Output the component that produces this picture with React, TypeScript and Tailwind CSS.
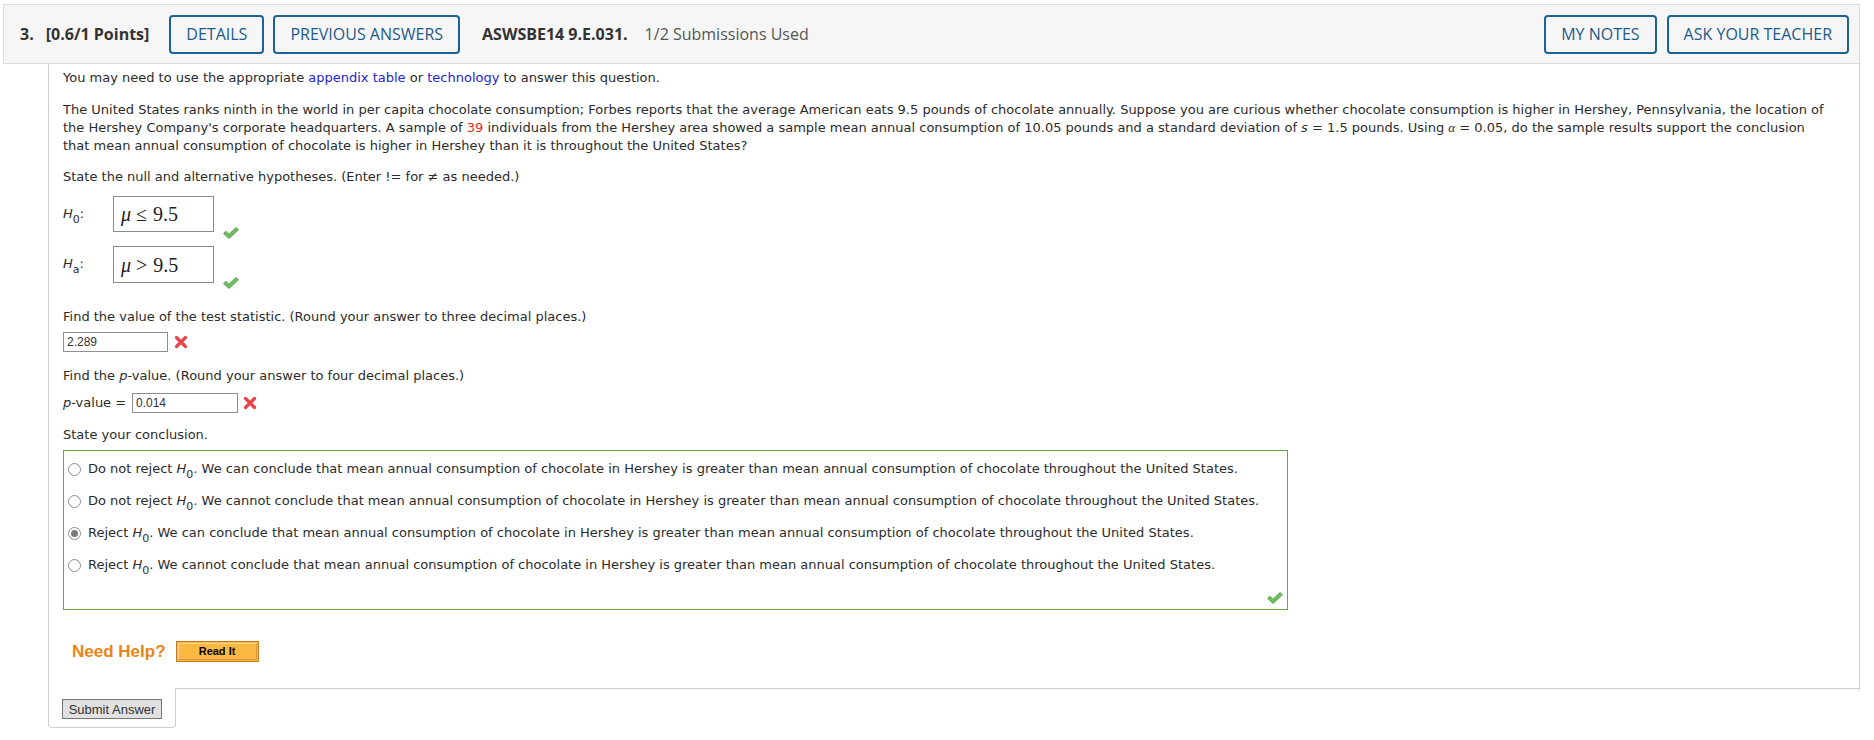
import React from "react";

const Check = () => (
  <svg width="16" height="12" viewBox="0 0 16 12" className="block">
    <polygon points="0.5,6.5 2.8,4.2 6,7.2 13,0.5 15.5,2.8 6,11.5" fill="#6dbf5f" stroke="#4d9a42" strokeWidth="0.8" strokeLinejoin="round" />
  </svg>
);

const Cross = () => (
  <svg width="14" height="14" viewBox="0 0 14 14" className="block">
    <path d="M2.5 2.5 L11.5 11.5 M11.5 2.5 L2.5 11.5" stroke="#e8454a" strokeWidth="3.2" strokeLinecap="round" />
  </svg>
);

const H0 = () => (
  <span className="whitespace-nowrap">
    <i>H</i>
    <sub className="text-[11px] not-italic bottom-[-5px]">0</sub>
  </span>
);

const Radio = ({ checked }: { checked?: boolean }) => (
  <span className="w-[13px] h-[13px] rounded-full border border-[#8c8c8c] bg-white flex items-center justify-center shrink-0">
    {checked && <span className="w-[7px] h-[7px] rounded-full bg-[#7a7a7a]" />}
  </span>
);

const HeaderButton = ({ children }: { children: React.ReactNode }) => (
  <button className="h-[39px] px-[15px] border-2 border-[#1c6197] rounded-[4px] text-[16px] text-[#1d5a8c] bg-[#f6f6f6] leading-none">
    {children}
  </button>
);

const options = [
  { pre: "Do not reject ", post: ". We can conclude that mean annual consumption of chocolate in Hershey is greater than mean annual consumption of chocolate throughout the United States." },
  { pre: "Do not reject ", post: ". We cannot conclude that mean annual consumption of chocolate in Hershey is greater than mean annual consumption of chocolate throughout the United States." },
  { pre: "Reject ", post: ". We can conclude that mean annual consumption of chocolate in Hershey is greater than mean annual consumption of chocolate throughout the United States.", checked: true },
  { pre: "Reject ", post: ". We cannot conclude that mean annual consumption of chocolate in Hershey is greater than mean annual consumption of chocolate throughout the United States." },
];

export default function App() {
  return (
    <div className="w-[1874px] h-[740px] bg-white overflow-hidden">
      <div className="ml-[3px] mt-[4px] w-[1857px] h-[60px] border border-[#dcdcdc] bg-[#f6f6f6] flex items-center pl-[16px] pr-[10px] font-['Open_Sans',sans-serif]">
        <span className="text-[16px] font-bold text-[#333]">3.</span>
        <span className="ml-[12px] text-[16px] font-bold text-[#333]">[0.6/1 Points]</span>
        <div className="ml-[20px] flex gap-[9px]">
          <HeaderButton>DETAILS</HeaderButton>
          <HeaderButton>PREVIOUS ANSWERS</HeaderButton>
        </div>
        <span className="ml-[22px] text-[16px] font-bold text-[#333]">ASWSBE14 9.E.031.</span>
        <span className="ml-[17px] text-[16px] text-[#555]">1/2 Submissions Used</span>
        <div className="ml-auto flex gap-[10px]">
          <HeaderButton>MY NOTES</HeaderButton>
          <HeaderButton>ASK YOUR TEACHER</HeaderButton>
        </div>
      </div>

      <div className="ml-[48px] w-[1812px] border-l border-r border-[#cfcfcf] pl-[14px] pt-[5px] pb-[26px] font-['DejaVu_Sans',Verdana,sans-serif] text-[13px] leading-[18px] text-[#2b2b2b]">
        <div>
          You may need to use the appropriate <span className="text-[#2323d3]">appendix table</span> or{" "}
          <span className="text-[#2323d3]">technology</span> to answer this question.
        </div>
        <div className="mt-[14px] whitespace-nowrap">
          <div>
            The United States ranks ninth in the world in per capita chocolate consumption; Forbes reports that the average American eats 9.5 pounds of chocolate annually. Suppose you are curious whether chocolate consumption is higher in Hershey, Pennsylvania, the location of
          </div>
          <div>
            the Hershey Company's corporate headquarters. A sample of <span className="text-[#e8261c]">39</span> individuals from the Hershey area showed a sample mean annual consumption of 10.05 pounds and a standard deviation of <i>s</i> = 1.5 pounds. Using <i className="font-['Liberation_Serif',serif]">α</i> = 0.05, do the sample results support the conclusion
          </div>
          <div>that mean annual consumption of chocolate is higher in Hershey than it is throughout the United States?</div>
        </div>
        <div className="mt-[13px]">State the null and alternative hypotheses. (Enter != for ≠ as needed.)</div>

        <div className="mt-[10px] h-[35px] flex items-start">
          <span className="w-[50px] h-[35px] flex items-center">
            <H0 />:
          </span>
          <div className="w-[101px] h-[36px] border border-[#8a8a8a] bg-white pl-[7px] flex items-center font-['Liberation_Serif',serif] text-[20px] text-[#222]">
            <i>μ</i>
            <span className="ml-[5px]">≤</span>
            <span className="ml-[6px]">9.5</span>
          </div>
          <span className="ml-[9px] mt-[31px]">
            <Check />
          </span>
        </div>
        <div className="mt-[15px] h-[36px] flex items-start">
          <span className="w-[50px] h-[36px] flex items-center">
            <span className="whitespace-nowrap">
              <i>H</i>
              <sub className="text-[11px] not-italic bottom-[-5px]">a</sub>
            </span>
            :
          </span>
          <div className="w-[101px] h-[37px] border border-[#8a8a8a] bg-white pl-[7px] flex items-center font-['Liberation_Serif',serif] text-[20px] text-[#222]">
            <i>μ</i>
            <span className="ml-[5px]">&gt;</span>
            <span className="ml-[6px]">9.5</span>
          </div>
          <span className="ml-[9px] mt-[31px]">
            <Check />
          </span>
        </div>

        <div className="mt-[26px]">Find the value of the test statistic. (Round your answer to three decimal places.)</div>
        <div className="mt-[6px] flex items-center">
          <div className="w-[105px] h-[20px] border border-[#8f8f8f] pl-[3px] flex items-center font-['Liberation_Sans',Arial,sans-serif] text-[12px] text-[#333]">2.289</div>
          <span className="ml-[6px]">
            <Cross />
          </span>
        </div>

        <div className="mt-[15px]">
          Find the <i>p</i>-value. (Round your answer to four decimal places.)
        </div>
        <div className="mt-[8px] flex items-center">
          <span className="w-[69px]">
            <i>p</i>-value =
          </span>
          <div className="w-[106px] h-[20px] border border-[#8f8f8f] pl-[3px] flex items-center font-['Liberation_Sans',Arial,sans-serif] text-[12px] text-[#333]">0.014</div>
          <span className="ml-[5px]">
            <Cross />
          </span>
        </div>

        <div className="mt-[13px]">State your conclusion.</div>
        <div className="mt-[6px] w-[1225px] h-[160px] border border-[#67a842] pl-[4px] pt-[9px] pr-[4px] pb-[5px] flex flex-col">
          <div className="flex flex-col gap-[14px]">
            {options.map((o, i) => (
              <div key={i} className="flex items-center h-[18px]">
                <Radio checked={o.checked} />
                <span className="ml-[7px] whitespace-nowrap">
                  {o.pre}
                  <H0 />
                  {o.post}
                </span>
              </div>
            ))}
          </div>
          <div className="mt-auto self-end">
            <Check />
          </div>
        </div>

        <div className="mt-[31px] ml-[9px] flex items-center font-['Liberation_Sans',Arial,sans-serif]">
          <span className="text-[17px] font-bold text-[#ec8513]">Need Help?</span>
          <button className="ml-[10px] w-[83px] h-[21px] border border-[#c87c21] bg-[#fbb843] p-[1px]">
            <span className="w-full h-full border border-[#f7d48e] border-r-[#d89a38] border-b-[#d89a38] flex items-center justify-center text-[11px] font-bold text-black leading-none">
              Read It
            </span>
          </button>
        </div>
      </div>

      <div className="ml-[48px] w-[1812px] flex">
        <div className="w-[128px] h-[40px] border-l border-r border-b border-[#cfcfcf] rounded-b-[4px] pl-[13px] pt-[11px]">
          <button className="w-[100px] h-[20px] bg-[#e1e1e1] border border-[#767676] flex items-center justify-center font-['Liberation_Sans',Arial,sans-serif] text-[13px] text-[#333] leading-none">
            Submit Answer
          </button>
        </div>
        <div className="flex-1 h-[4px] border-t border-r border-[#cfcfcf] rounded-br-[4px]" />
      </div>
    </div>
  );
}
